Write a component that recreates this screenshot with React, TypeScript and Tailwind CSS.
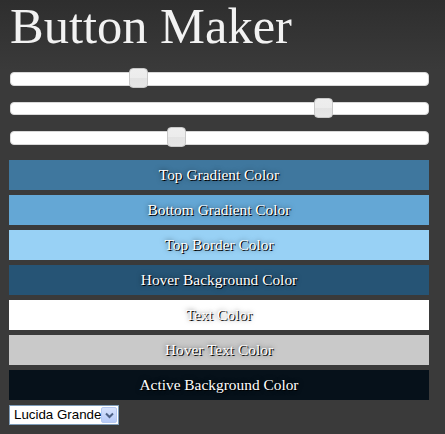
import React from "react";

const bars = [
  { label: "Top Gradient Color", bg: "bg-[#3f779e]" },
  { label: "Bottom Gradient Color", bg: "bg-[#64a7d5]" },
  { label: "Top Border Color", bg: "bg-[#98d1f5]" },
  { label: "Hover Background Color", bg: "bg-[#265475]" },
  { label: "Text Color", bg: "bg-[#ffffff]" },
  { label: "Hover Text Color", bg: "bg-[#c9c9c9]" },
  { label: "Active Background Color", bg: "bg-[#06111a]" },
];

const sliders = [118.5, 304, 157];

function Slider({ pos }: { pos: number }) {
  return (
    <div className="relative h-[20px] w-[419px] ml-[1px]">
      <div className="absolute left-0 right-0 top-[4px] h-[13.5px] rounded-[4px] bg-white border border-[#d8d8d8]" />
      <div
        className="absolute top-0 h-[20px] w-[19px] rounded-[4px] border border-[#c8c8c8] bg-[linear-gradient(#eeeeee_0%,#ececec_50%,#e3e3e3_52%,#e6e6e6_100%)]"
        style={{ left: pos }}
      />
    </div>
  );
}

export default function App() {
  return (
    <div className="h-[434px] w-full bg-[linear-gradient(#2e2e2e_0px,#3a3a3a_70px,#3a3a3a_100%)] pl-[9px] pt-[1px] overflow-hidden">
      <h1 className="-mt-[4px] leading-[58px] text-[50.5px] font-['Liberation_Serif',serif] pl-[1px] text-[#f2f2f2] whitespace-nowrap">
        Button Maker
      </h1>
      <div className="mt-[13px] flex flex-col gap-[9.5px]">
        {sliders.map((p, i) => (
          <Slider key={i} pos={p} />
        ))}
      </div>
      <div className="mt-[13px] flex flex-col gap-[5px]">
        {bars.map((b) => (
          <div
            key={b.label}
            className={`${b.bg} w-[420px] h-[30px] flex items-center justify-center text-white text-[15.4px] font-['Liberation_Serif',serif] [text-shadow:1px_1px_0_#000,0_0_5px_rgba(0,0,0,0.55)]`}
          >
            {b.label}
          </div>
        ))}
      </div>
      <div className="mt-[5px] w-[110px] h-[20px] border border-[#7f9db9] bg-white flex items-center">
        <span className="flex-1 min-w-0 overflow-hidden whitespace-nowrap pl-[4px] text-[13.33px] leading-none text-black font-['Liberation_Sans',Arial,sans-serif]">
          Lucida Grande
        </span>
        <div className="shrink-0 w-[16px] h-[16px] mr-[1px] rounded-[2px] border border-[#b5c8f1] bg-[linear-gradient(#d6e2fd,#b7cbf8)] flex items-center justify-center">
          <svg width="9" height="7" viewBox="0 0 9 7">
            <path d="M1 1.5 L4.5 5 L8 1.5" fill="none" stroke="#4d6185" strokeWidth="2" />
          </svg>
        </div>
      </div>
    </div>
  );
}
